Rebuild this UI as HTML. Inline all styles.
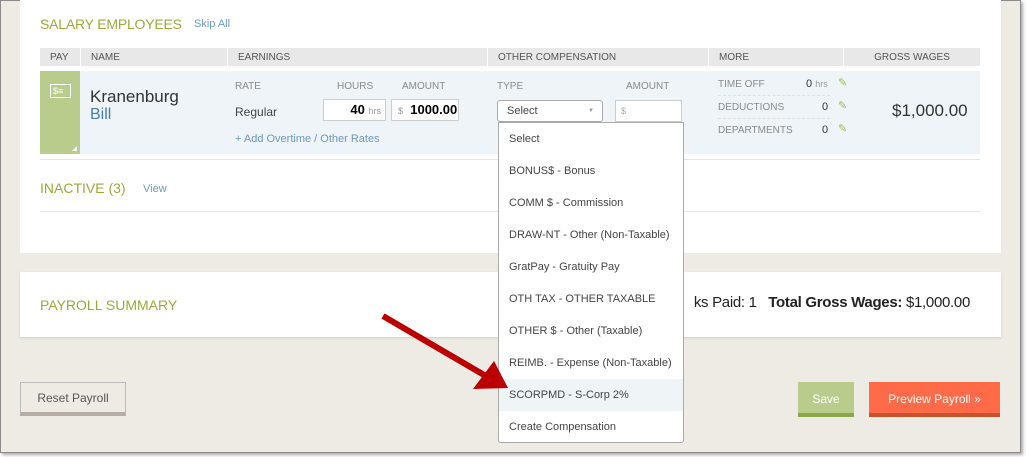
<!DOCTYPE html>
<html><head><style>
*{box-sizing:border-box;margin:0;padding:0}
body{width:1026px;height:456px;background:#fff;font-family:"Liberation Sans",sans-serif;position:relative;overflow:hidden}
.frame{position:absolute;left:0;top:0;width:1021px;height:453px;border:1px solid #8a8a8a;background:#eeebe4;box-shadow:2px 2px 3px #aaa}
.abs{position:absolute;white-space:nowrap}
.panel{position:absolute;background:#fff}
.h{color:#9aaa3a;font-size:15px}
.th{position:absolute;top:47px;height:18px;background:#e8e8e8;font-size:10px;color:#555;line-height:20px;padding-left:10px}
.lbl{font-size:10px;color:#8a8a8a;position:absolute}
.inp{position:absolute;background:#fff;border:1px solid #ccc;height:22px}
.dd div{height:32px;line-height:32px;padding-left:10px;font-size:11px;color:#444}
.pen{position:absolute;color:#9bbc5a;font-size:11px}
.dash{position:absolute;left:717px;width:112px;border-top:1px dashed #e0e0e0}
</style></head><body>
<div class="frame">
<div class="panel" style="left:19px;top:-1px;width:981px;height:253px"></div>
<div class="abs h" style="left:39px;top:15px;font-size:14px;letter-spacing:-0.2px">SALARY EMPLOYEES</div>
<div class="abs" style="left:193px;top:17px;font-size:11px;color:#6a9ab8">Skip All</div>
<div class="th" style="left:39px;width:40px">PAY</div>
<div class="th" style="left:80px;width:146px">NAME</div>
<div class="th" style="left:227px;width:259px">EARNINGS</div>
<div class="th" style="left:487px;width:220px">OTHER COMPENSATION</div>
<div class="th" style="left:708px;width:134px">MORE</div>
<div class="th" style="left:843px;width:136px;padding:0;text-align:center">GROSS WAGES</div>
<div class="abs" style="left:39px;top:70px;width:940px;height:83px;background:#eef4f7"></div>
<div class="abs" style="left:39px;top:70px;width:40px;height:83px;background:#b9cc8c"></div>
<div class="abs" style="left:49px;top:83px;width:21px;height:14px;border:1px solid #fff;color:#fff;font-size:9px;line-height:12px;padding-left:2px">$≡</div>
<div class="abs" style="left:71px;top:145px;width:0;height:0;border-left:5px solid transparent;border-bottom:5px solid #fff"></div>
<div class="abs" style="left:89px;top:86px;font-size:17px;color:#333">Kranenburg</div>
<div class="abs" style="left:89px;top:105px;font-size:16px;color:#4a7ea8">Bill</div>
<div class="lbl" style="left:234px;top:80px">RATE</div>
<div class="lbl" style="left:336px;top:80px">HOURS</div>
<div class="lbl" style="left:401px;top:80px">AMOUNT</div>
<div class="abs" style="left:234px;top:104px;font-size:12px;color:#444">Regular</div>
<div class="inp" style="left:322px;top:98px;width:63px;text-align:right;padding-right:4px;font-size:13px;font-weight:bold;line-height:20px">40 <span style="font-weight:normal;font-size:9px;color:#999">hrs</span></div>
<div class="inp" style="left:390px;top:98px;width:68px;font-size:13px;font-weight:bold;line-height:20px;padding-left:6px"><span style="font-weight:normal;font-size:9px;color:#999">$</span>&nbsp; 1000.00</div>
<div class="abs" style="left:234px;top:132px;font-size:11px;color:#6a9ab8">+ Add Overtime / Other Rates</div>
<div class="lbl" style="left:496px;top:80px">TYPE</div>
<div class="lbl" style="left:625px;top:80px">AMOUNT</div>
<div class="inp" style="left:496px;top:99px;width:106px;border-radius:3px;border-color:#aaa;font-size:11px;line-height:20px;padding-left:9px;color:#444">Select<span style="position:absolute;right:8px;font-size:6px;color:#999">▼</span></div>
<div class="inp" style="left:614px;top:99px;width:67px;font-size:9px;color:#aaa;line-height:20px;padding-left:5px">$</div>
<div class="lbl" style="left:717px;top:78px">TIME OFF</div>
<div class="lbl" style="left:717px;top:101px">DEDUCTIONS</div>
<div class="lbl" style="left:717px;top:124px">DEPARTMENTS</div>
<div class="abs" style="left:805px;top:77px;font-size:11px;color:#333">0 <span style="font-size:9px;color:#999">hrs</span></div>
<div class="abs" style="left:821px;top:100px;font-size:11px;color:#333">0</div>
<div class="abs" style="left:821px;top:123px;font-size:11px;color:#333">0</div>
<div class="pen" style="left:837px;top:75px">✎</div><div class="pen" style="left:837px;top:98px">✎</div><div class="pen" style="left:837px;top:121px">✎</div>
<div class="dash" style="top:94px"></div><div class="dash" style="top:117px"></div>
<div class="abs" style="left:891px;top:100px;font-size:17px;color:#333">$1,000.00</div>
<div class="abs" style="left:39px;top:158px;width:940px;border-top:1px solid #e5e5e5"></div>
<div class="abs h" style="left:39px;top:179px;font-size:14px">INACTIVE (3)</div>
<div class="abs" style="left:142px;top:182px;font-size:11px;color:#6a9ab8">View</div>
<div class="abs" style="left:39px;top:210px;width:940px;border-top:1px solid #e5e5e5"></div>
<div class="panel" style="left:19px;top:271px;width:981px;height:65px;box-shadow:0 1px 2px #ccc"></div>
<div class="abs h" style="left:39px;top:296px;font-size:14px">PAYROLL SUMMARY</div>
<div class="abs" style="right:50px;top:293px;font-size:15px;color:#222;letter-spacing:-0.3px">ks Paid: 1 &nbsp; <b>Total Gross Wages:</b> $1,000.00</div>
<div class="abs" style="left:19px;top:381px;width:106px;height:34px;background:#eeebe4;border:1px solid #bbb;border-bottom:4px solid #b5aca5;font-size:12px;color:#555;text-align:center;line-height:31px">Reset Payroll</div>
<div class="abs" style="left:797px;top:381px;width:56px;height:35px;background:#b9cc8c;border-bottom:4px solid #8aa847;font-size:12px;color:#fff;text-align:center;line-height:34px">Save</div>
<div class="abs" style="left:868px;top:381px;width:131px;height:35px;background:#ff6b48;border-bottom:4px solid #c5532f;font-size:12px;color:#fff;text-align:center;line-height:34px">Preview Payroll »</div>
<div class="abs dd" style="left:497px;top:121px;width:186px;height:321px;background:#fff;border:1px solid #aaa;border-radius:0 0 3px 3px">
<div>Select</div><div>BONUS$ - Bonus</div><div>COMM $ - Commission</div><div>DRAW-NT - Other (Non-Taxable)</div><div>GratPay - Gratuity Pay</div><div>OTH TAX - OTHER TAXABLE</div><div>OTHER $ - Other (Taxable)</div><div>REIMB. - Expense (Non-Taxable)</div><div style="background:#eff4f7">SCORPMD - S-Corp 2%</div><div>Create Compensation</div>
</div>
<svg class="abs" style="left:0;top:0" width="1026" height="456"><line x1="382" y1="315" x2="490" y2="378" stroke="#b00" stroke-width="6"/><polygon points="507,387 472,388 493,360" fill="#b00"/></svg>
</div>
</body></html>
